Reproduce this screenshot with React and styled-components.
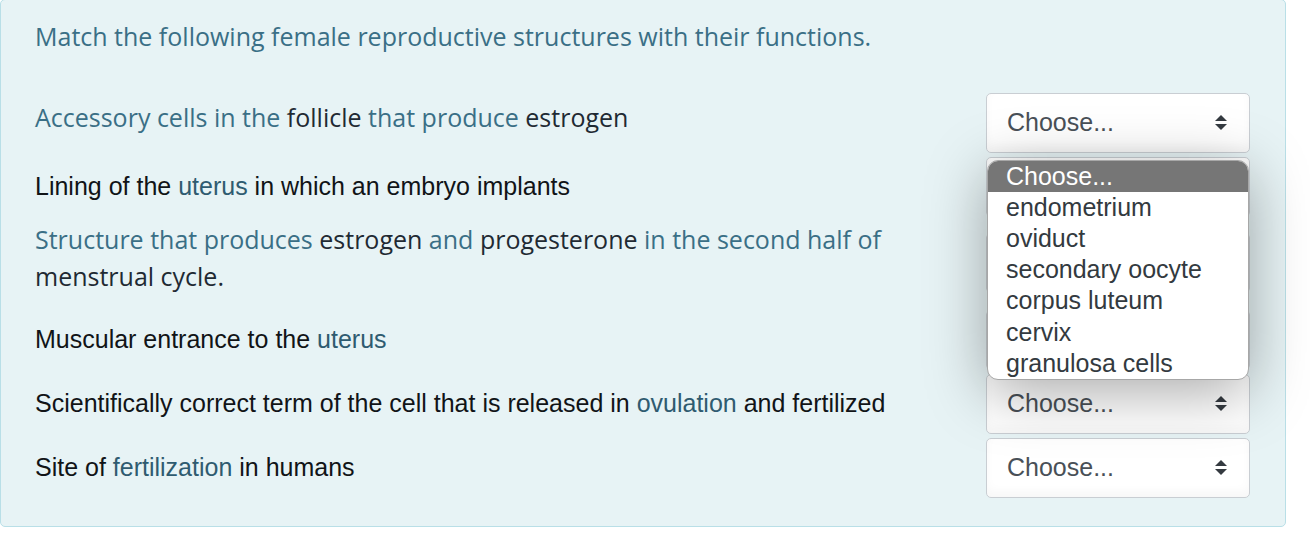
import React from 'react';
import styled, { createGlobalStyle } from 'styled-components';

const GlobalStyle = createGlobalStyle`
  html, body {
    margin: 0;
    padding: 0;
    background: #ffffff;
    overflow: hidden;
  }
  body {
    font-family: "Open Sans", "Liberation Sans", sans-serif;
    font-size: 25px;
    line-height: 1.5;
  }
`;

const Panel = styled.div`
  width: 1286px;
  box-sizing: border-box;
  margin-top: -1px;
  padding: 18px 35px 28px 34px;
  background: #e7f3f5;
  border: 1px solid #b9dfe7;
  border-radius: 5px;
`;

const Heading = styled.p`
  margin: 0 0 37px;
  color: #3a6f86;
  font-family: "Open Sans", sans-serif;
`;

const Rows = styled.div`
  display: flex;
  flex-direction: column;
  gap: 4px;
`;

const Row = styled.div`
  display: flex;
  align-items: center;
  min-height: 60px;
  gap: 26px;
`;

const Prompt = styled.div`
  flex: 1;
  min-width: 0;
  ${(p) =>
    p.$rich
      ? `
    font-family: "Open Sans", sans-serif;
    color: #3a6f86;
    margin-bottom: 10px;
    align-self: ${p.$top ? 'flex-start' : 'center'};
  `
      : `
    font-family: "Liberation Sans", Arial, sans-serif;
    color: #111417;
  `}
`;

const Dark = styled.span`
  color: #1f2a33;
`;

const Term = styled.span`
  color: #2f5b70;
`;

const SelectWrap = styled.div`
  position: relative;
  flex: 0 0 264px;
  align-self: center;
`;

const SelectBox = styled.div`
  height: 60px;
  box-sizing: border-box;
  display: flex;
  align-items: center;
  justify-content: space-between;
  padding: 0 22px 0 20px;
  background: #ffffff;
  border: 1px solid #c9ced3;
  border-radius: 5px;
  font-family: "Liberation Sans", Arial, sans-serif;
  color: #495057;
  box-shadow: inset 0 -6px 10px rgba(0, 0, 0, 0.03);
`;

const Popup = styled.ul`
  position: absolute;
  z-index: 10;
  top: calc(100% + 7px);
  left: 1px;
  width: 262px;
  box-sizing: border-box;
  margin: 0;
  padding: 0;
  list-style: none;
  background: #ffffff;
  border: 1px solid #a7a7a7;
  border-radius: 11px;
  overflow: hidden;
  box-shadow: 0 12px 60px rgba(0, 0, 0, 0.34);
`;

const Option = styled.li`
  height: 31.2px;
  padding-left: 18px;
  display: flex;
  align-items: center;
  font-family: "Liberation Sans", Arial, sans-serif;
  font-size: 25px;
  line-height: 1;
  color: ${(p) => (p.$active ? '#ffffff' : '#333a40')};
  background: ${(p) => (p.$active ? '#767676' : 'transparent')};
`;

const Arrows = () => (
  <svg width="12" height="15" viewBox="0 0 12 15">
    <path d="M6 0 L12 6 L0 6 Z" fill="#343a40" />
    <path d="M0 9 L12 9 L6 15 Z" fill="#343a40" />
  </svg>
);

const choices = [
  'Choose...',
  'endometrium',
  'oviduct',
  'secondary oocyte',
  'corpus luteum',
  'cervix',
  'granulosa cells',
];

const Select = ({ open }) => (
  <SelectWrap>
    <SelectBox>
      <span>Choose...</span>
      <Arrows />
    </SelectBox>
    {open && (
      <Popup>
        {choices.map((c, i) => (
          <Option key={c} $active={i === 0}>
            {c}
          </Option>
        ))}
      </Popup>
    )}
  </SelectWrap>
);

export default function App() {
  return (
    <>
      <GlobalStyle />
      <Panel>
        <Heading>Match the following female reproductive structures with their functions.</Heading>
        <Rows>
          <Row>
            <Prompt $rich>
              Accessory cells in the <Dark>follicle</Dark> that produce <Dark>estrogen</Dark>
            </Prompt>
            <Select open />
          </Row>
          <Row>
            <Prompt>
              Lining of the <Term>uterus</Term> in which an embryo implants
            </Prompt>
            <Select />
          </Row>
          <Row>
            <Prompt $rich $top>
              Structure that produces <Dark>estrogen</Dark> and <Dark>progesterone</Dark> in the second half of{' '}
              <Dark>menstrual cycle.</Dark>
            </Prompt>
            <Select />
          </Row>
          <Row>
            <Prompt>
              Muscular entrance to the <Term>uterus</Term>
            </Prompt>
            <Select />
          </Row>
          <Row>
            <Prompt>
              Scientifically correct term of the cell that is released in <Term>ovulation</Term> and fertilized
            </Prompt>
            <Select />
          </Row>
          <Row>
            <Prompt>
              Site of <Term>fertilization</Term> in humans
            </Prompt>
            <Select />
          </Row>
        </Rows>
      </Panel>
    </>
  );
}
